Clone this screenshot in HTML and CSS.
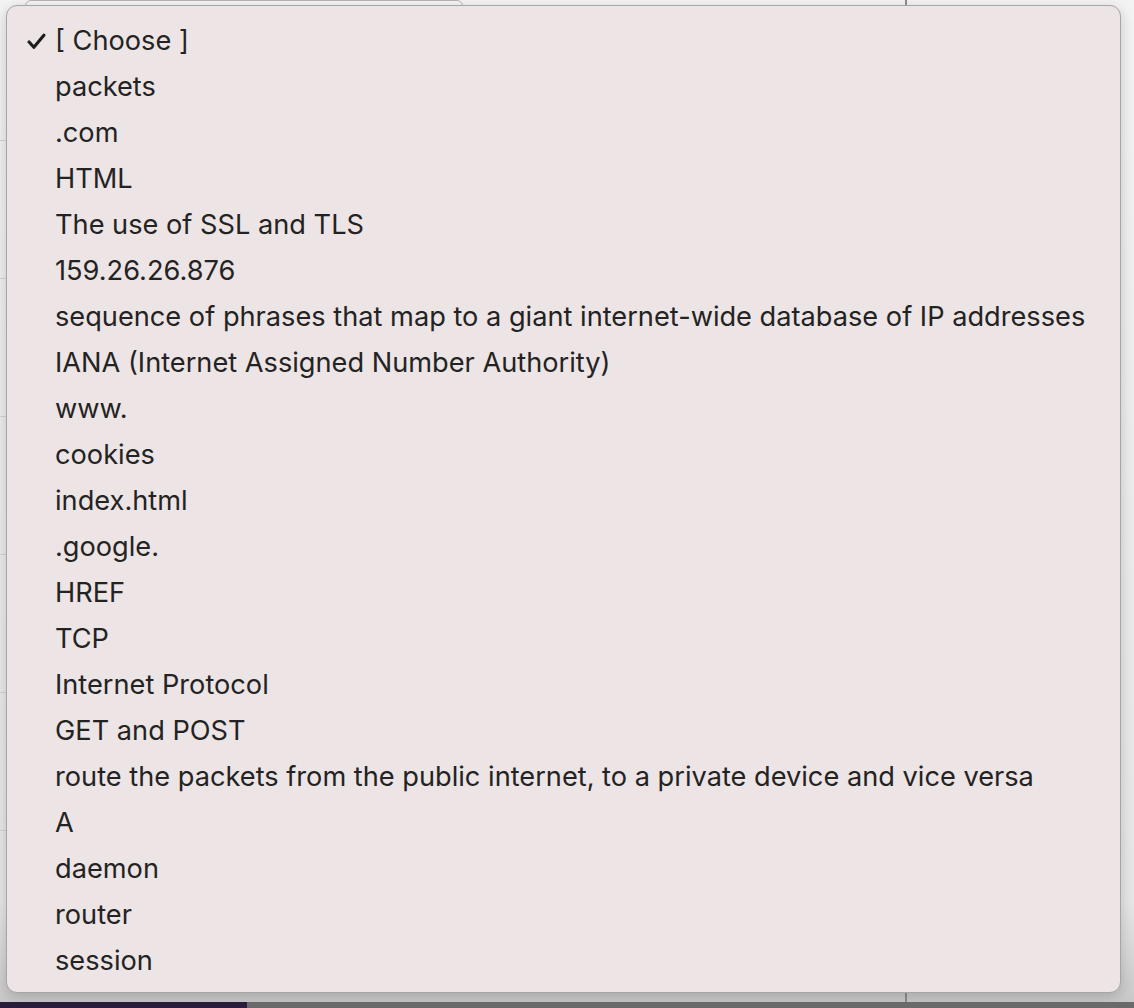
FILE: index.html
```html
<!DOCTYPE html>
<html lang="en">
<head>
    <meta charset="UTF-8">
    <title>Quiz - Choose</title>
    <link rel="stylesheet" href="styles.css">
</head>
<body>
    <div class="page">
        <div class="select-box"></div>
        <div class="rows">
            <div class="row"></div>
            <div class="row"></div>
            <div class="row"></div>
            <div class="row"></div>
            <div class="row"></div>
            <div class="row"></div>
            <div class="row"></div>
            <div class="row"></div>
        </div>

        <!-- open select menu -->
        <ul class="menu">
            <li class="selected">
                <svg class="check" viewBox="0 0 18 16" width="19" height="17">
                    <path d="M2 8.5 L6.5 13.5 L16 2" fill="none" stroke="#1d1d1d" stroke-width="3" stroke-linecap="round" stroke-linejoin="round"/>
                </svg>
                [ Choose ]
            </li>
            <li>packets</li>
            <li>.com</li>
            <li>HTML</li>
            <li>The use of SSL and TLS</li>
            <li>159.26.26.876</li>
            <li>sequence of phrases that map to a giant internet-wide database of IP addresses</li>
            <li>IANA (Internet Assigned Number Authority)</li>
            <li>www.</li>
            <li>cookies</li>
            <li>index.html</li>
            <li>.google.</li>
            <li>HREF</li>
            <li>TCP</li>
            <li>Internet Protocol</li>
            <li>GET and POST</li>
            <li>route the packets from the public internet, to a private device and vice versa</li>
            <li>A</li>
            <li>daemon</li>
            <li>router</li>
            <li>session</li>
        </ul>
    </div>
    <div class="dock">
        <div class="dock-left"></div>
        <div class="dock-right"></div>
    </div>
</body>
</html>
```

FILE: styles.css
```css
html, body {
    margin: 0;
    padding: 0;
}
body {
    font-family: Inter, "Noto Sans", Arial, sans-serif;
    width: 1134px;
    height: 1008px;
    overflow: hidden;
    background: #c9c9c9;
}
.page {
    position: relative;
    height: 1002px;
    background: linear-gradient(to bottom, #f3f3f3, #e6e6e6 90%, #c9c9c9);
    overflow: hidden;
}
.select-box {
    position: absolute;
    left: 25px;
    top: 0;
    width: 436px;
    height: 30px;
    border: 1px solid #b4b4b4;
    border-radius: 6px;
    background: #f4f4f4;
}
.rows {
    padding-top: 3px;
    width: 907px;
    border-right: 2px solid #8e8e8e;
    height: 1002px;
    box-sizing: border-box;
}
.row {
    height: 137px;
    border-bottom: 1px solid #d4d4d4;
}
.menu {
    position: absolute;
    left: 6px;
    top: 5px;
    width: 1115px;
    height: 988px;
    margin: 0;
    padding: 18px 0 0;
    list-style: none;
    background: #ede4e5;
    border: 1px solid #a9a4a5;
    border-radius: 11px;
    box-shadow: 0 4px 14px rgba(0, 0, 0, 0.18);
    box-sizing: border-box;
}
.menu li {
    position: relative;
    height: 46px;
    line-height: 46px;
    padding-left: 48px;
    font-size: 27.2px;
    color: #232323;
    white-space: nowrap;
}
.menu li:first-child {
    margin-top: -6px;
}
.check {
    position: absolute;
    left: 20px;
    top: 15px;
}
.dock {
    display: flex;
    height: 6px;
}
.dock-left {
    width: 247px;
    background: #2b1c3b;
}
.dock-right {
    flex: 1;
    background: #6a6a6a;
}
```
